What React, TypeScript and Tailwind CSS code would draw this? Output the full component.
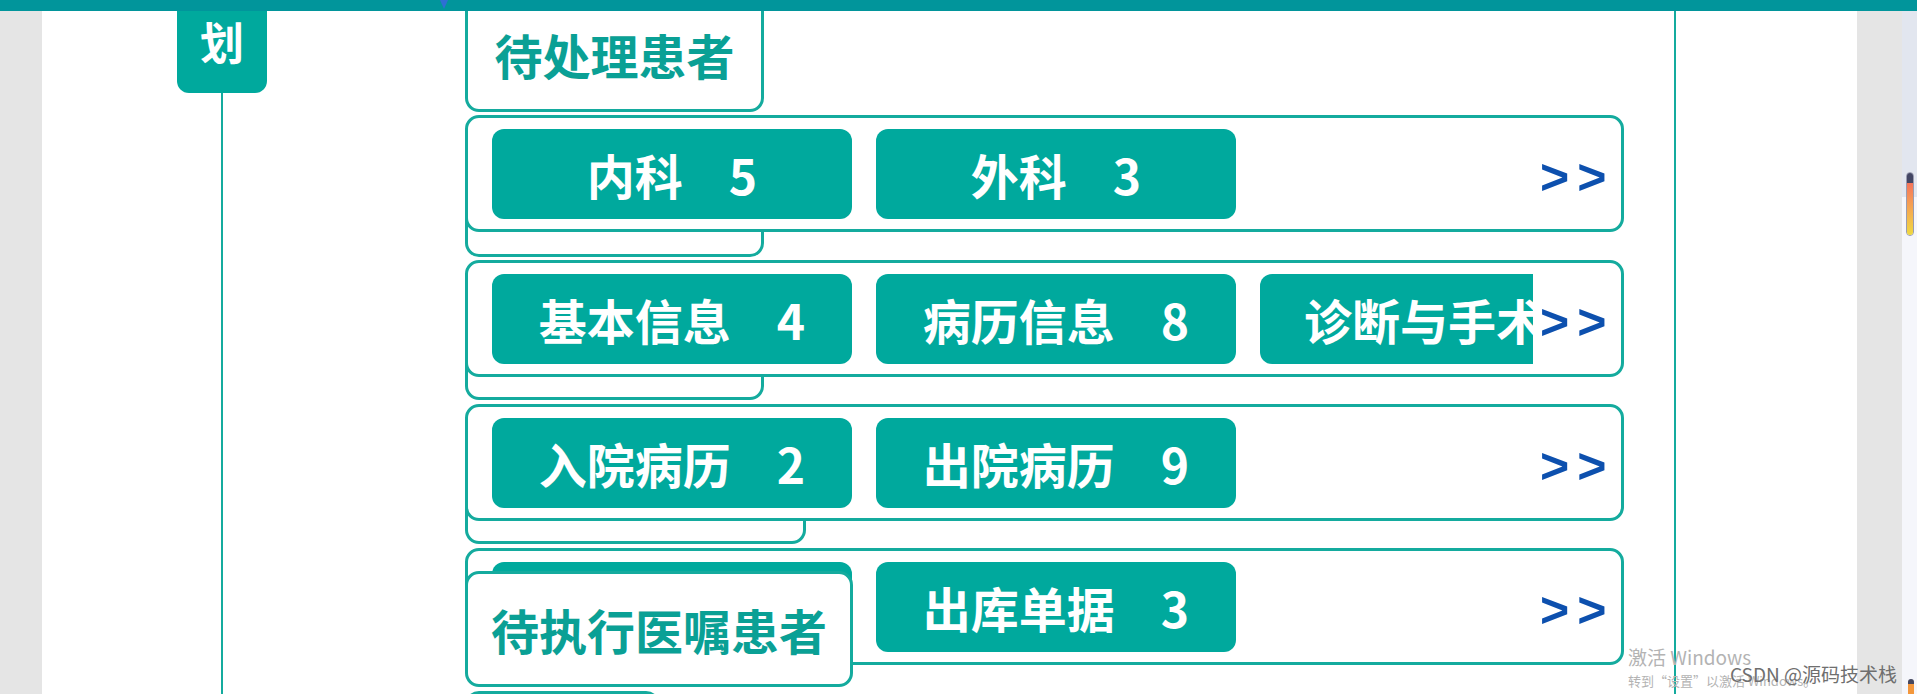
import React from 'react';

type Item = { label: string; count: number };

const rows: Item[][] = [
  [{ label: '内科', count: 5 }, { label: '外科', count: 3 }],
  [{ label: '基本信息', count: 4 }, { label: '病历信息', count: 8 }, { label: '诊断与手术', count: 6 }],
  [{ label: '入院病历', count: 2 }, { label: '出院病历', count: 9 }],
  [{ label: '医嘱执行', count: 7 }, { label: '出库单据', count: 3 }],
];

function Chip({ item }: { item: Item }) {
  return (
    <div className="shrink-0 w-[360px] h-[90px] rounded-[12px] bg-[#00a99d] px-[44px] text-center whitespace-nowrap text-white font-bold text-[48px] leading-[90px]">
      {item.label}
      <span className="ml-[46px]">{item.count}</span>
    </div>
  );
}

function Row({ items, className }: { items: Item[]; className: string }) {
  return (
    <div className={`relative z-10 h-[117px] w-[1159px] shrink-0 rounded-[14px] border-[3px] border-[#14ab9e] bg-white flex items-center pl-[24px] ${className}`}>
      <div className="w-[1041px] overflow-hidden flex gap-[24px]">
        {items.map((it) => (
          <Chip key={it.label} item={it} />
        ))}
      </div>
      <span className="ml-[7px] mt-[6px] font-['Liberation_Sans',sans-serif] font-bold text-[50px] leading-none tracking-[8px] text-[#0d50ae]">
        &gt;&gt;
      </span>
    </div>
  );
}

function Tab({ title, className }: { title?: string; className: string }) {
  return (
    <div className={`relative shrink-0 h-[116px] rounded-[14px] border-[3px] border-[#14ab9e] bg-white flex items-center justify-center text-[48px] font-bold text-[#0aa095] whitespace-nowrap ${className}`}>
      {title}
    </div>
  );
}

export default function App() {
  return (
    <div className="relative h-[694px] w-full overflow-hidden flex bg-[#e5e5e5] font-['Noto_Sans_CJK_SC',sans-serif]">
      {/* top bar */}
      <div className="absolute top-0 left-0 right-0 z-40 h-[11px] bg-[#01959b]">
        <div className="absolute left-[440px] top-0 w-0 h-0 border-l-[4px] border-r-[4px] border-t-[9px] border-l-transparent border-r-transparent border-t-[#2f6fd4]" />
      </div>

      <div className="w-[42px] shrink-0" />

      <div className="w-[1815px] shrink-0 bg-white flex">
        {/* timeline */}
        <div className="ml-[135px] w-[90px] shrink-0 flex flex-col items-center">
          <div className="h-[93px] w-[90px] shrink-0 rounded-b-[12px] bg-[#00a99d] overflow-hidden flex flex-col items-center justify-end pb-[30px] text-white font-bold text-[44px] leading-[44px]">
            <span className="mb-[10px]">计</span>
            <span>划</span>
          </div>
          <div className="w-[2px] flex-1 bg-[#14ab9e]" />
        </div>

        {/* cards */}
        <div className="ml-[198px] w-[1159px] shrink-0 flex flex-col">
          <Tab title="待处理患者" className="w-[299px] mt-[-4px]" />
          <Row items={rows[0]} className="mt-[3px]" />
          <Tab className="w-[299px] mt-[-91px]" />
          <Row items={rows[1]} className="mt-[3px]" />
          <Tab className="w-[299px] mt-[-93px]" />
          <Row items={rows[2]} className="mt-[4px]" />
          <Tab className="w-[341px] mt-[-93px]" />
          <Row items={rows[3]} className="mt-[4px]" />
          <Tab title="待执行医嘱患者" className="z-20 w-[388px] mt-[-94px]" />
          <Tab className="w-[195px] mt-[4px]" />
        </div>

        <div className="ml-[50px] w-[2px] shrink-0 bg-[#14ab9e]" />
      </div>

      <div className="w-[45px] shrink-0 bg-[#e5e5e5]" />

      {/* scrollbar strip */}
      <div className="w-[15px] shrink-0 flex flex-col">
        <div className="h-[197px] bg-[#e2e6ef]" />
        <div className="flex-1 bg-[#f5f6fb]" />
      </div>
      <div className="absolute left-[1906px] top-[172px] z-30 w-[8px] h-[64px] rounded-full overflow-hidden flex flex-col border border-[#9a9cb0]">
        <div className="h-[10px] bg-[#434664]" />
        <div className="flex-1 bg-gradient-to-b from-[#f4735a] to-[#efd93f]" />
      </div>
      <div className="absolute left-[1908px] top-[679px] z-30 w-[6px] h-[20px] rounded-t-full overflow-hidden flex flex-col">
        <div className="h-[5px] bg-[#45475f]" />
        <div className="flex-1 bg-[#f3973c]" />
      </div>

      {/* watermarks */}
      <div className="absolute left-[1628px] top-[647px] z-30 pointer-events-none text-[#b3b3b3] leading-none">
        <div className="text-[19px]">激活 Windows</div>
        <div className="mt-[8px] text-[13px]">转到“设置”以激活 Windows。</div>
      </div>
      <div className="absolute left-[1730px] top-[664px] z-30 pointer-events-none text-[19px] leading-none text-[#6f6f6f]">
        CSDN @源码技术栈
      </div>
    </div>
  );
}
